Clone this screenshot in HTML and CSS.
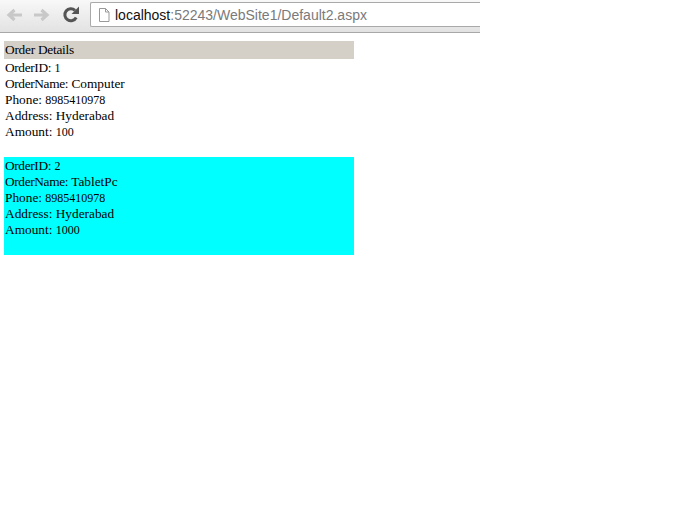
FILE: index.html
```html
<!DOCTYPE html>
<html>
<head>
<meta charset="utf-8">
<title>Order Details</title>
<link rel="stylesheet" href="styles.css">
</head>
<body>
<div class="toolbar">
  <svg class="nav" width="18" height="16" viewBox="0 0 18 16"><path d="M17 8H5M9.500 3 4 8l5.500 5" fill="none" stroke="#c8c8c8" stroke-width="3.200"/></svg>
  <svg class="nav" width="18" height="16" viewBox="0 0 18 16"><path d="M1 8h12M8.500 3 14 8l-5.500 5" fill="none" stroke="#c8c8c8" stroke-width="3.200"/></svg>
  <svg class="nav reload" width="18" height="18" viewBox="0 0 18 18"><path d="M14.200 11.500A6 6 0 1 1 13 4.400" fill="none" stroke="#555" stroke-width="3"/><path d="M9.500 8h7.500V.5z" fill="#555"/></svg>
  <div class="omnibox">
    <svg class="page-icon" width="12" height="14" viewBox="0 0 12 14"><path d="M1.500.5h6l3.500 3.500v9.500H1.500zM7.500.5V4H11" fill="#fff" stroke="#999"/></svg>
    <span class="host">localhost</span><span class="rest">:52243/WebSite1/Default2.aspx</span>
  </div>
</div>
<div class="page">
  <div class="heading">Order Details</div>
  <div class="order">
    <div><span class="tight">OrderID:</span> <span class="num">1</span></div>
    <div><span class="tight">OrderName:</span> Computer</div>
    <div>Phone: <span class="num">8985410978</span></div>
    <div>Address: Hyderabad</div>
    <div>Amount: <span class="num">100</span></div>
  </div>
  <div class="order alt">
    <div><span class="tight">OrderID:</span> <span class="num">2</span></div>
    <div><span class="tight">OrderName:</span> TabletPc</div>
    <div>Phone: <span class="num">8985410978</span></div>
    <div>Address: Hyderabad</div>
    <div>Amount: <span class="num">1000</span></div>
  </div>
</div>
</body>
</html>
```
FILE: styles.css
```css
html, body { margin: 0; padding: 0; background: #fff; }
body { font-family: "Liberation Serif", "Times New Roman", serif; font-size: 13.33px; line-height: 16px; color: #000; }
.toolbar {
  width: 480px; height: 33px; box-sizing: border-box;
  display: flex; align-items: flex-start; padding: 2px 0 0 5px;
  background: linear-gradient(#f8f8f8, #e2e2e2);
  border-bottom: 1px solid #a8a8a8;
}
.nav { flex: none; margin: 5px 0 0 0; }
.nav + .nav { margin-left: 10px; }
.nav.reload { margin: 4px 10px 0 11px; }
.omnibox {
  flex: 1; height: 25px; box-sizing: border-box; display: flex; align-items: center;
  background: #fff; border: 1px solid #a9a9a9; border-right: 0; border-radius: 2px 0 0 2px;
  padding-left: 7px;
  font-family: "Liberation Sans", Arial, sans-serif; font-size: 14px; white-space: nowrap;
}
.page-icon { margin-right: 5px; flex: none; }
.host { color: #111; }
.rest { color: #7a7a7a; }
.page { width: 350px; padding: 8px 0 0 4px; }
.heading { height: 18px; line-height: 18px; background: #d4d0c8; padding-left: 1px; letter-spacing: -0.25px; }
.order { padding: 1px 0 17px 1px; }
.alt { background: #00ffff; }
.tight { letter-spacing: -0.35px; }
.num { font-size: 12px; }
```
